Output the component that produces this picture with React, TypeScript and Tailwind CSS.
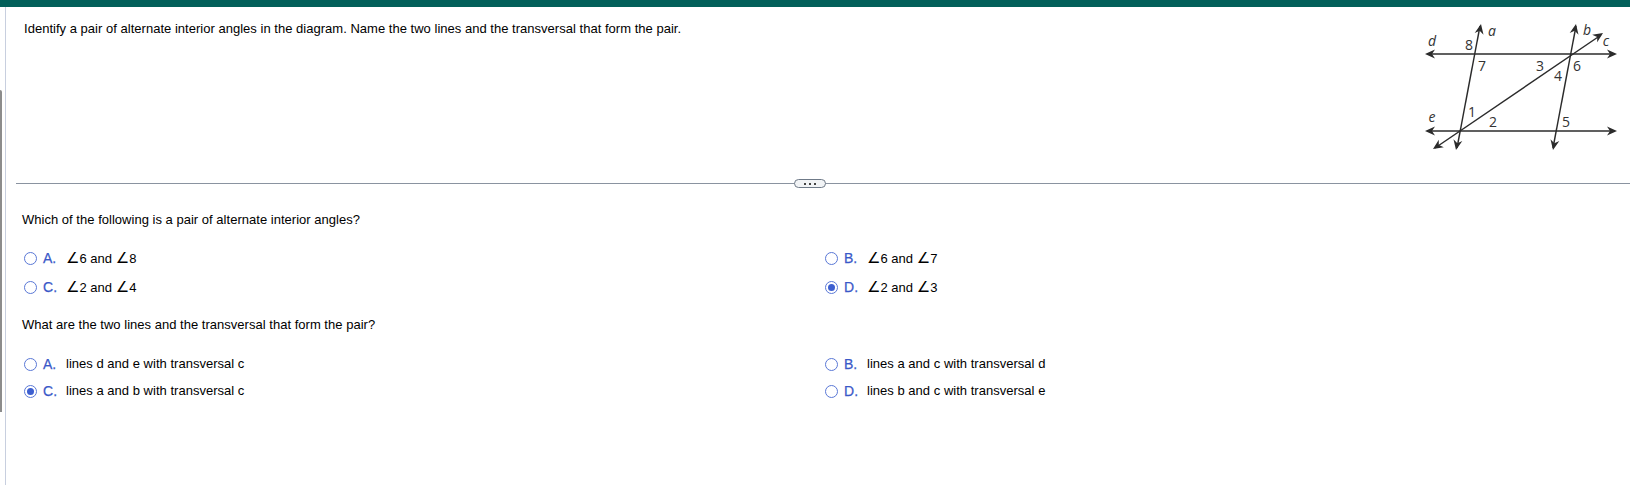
import type { ReactNode } from 'react';

interface OptionProps {
  letter: string;
  checked?: boolean;
  children: ReactNode;
}

function Option({ letter, checked, children }: OptionProps) {
  return (
    <div className="flex items-center h-5">
      <span className="flex items-center justify-center w-[13px] h-[13px] rounded-full border-[1.5px] border-[#5a78d6] bg-white">
        {checked && <span className="w-[7px] h-[7px] rounded-full bg-[#3d5fd0]" />}
      </span>
      <span className="ml-[6px] w-[23px] text-[#3a58c8] text-[14px] [-webkit-text-stroke:0.25px_#3a58c8]">{letter}.</span>
      <span className="text-[13px] text-black tracking-[0.02px]">{children}</span>
    </div>
  );
}

function AnglePair({ a, b }: { a: number; b: number }) {
  return (
    <span className="block pt-[2px]">
      <span className="font-['DejaVu_Sans'] text-[15px] leading-none">∠</span>
      {a} and <span className="font-['DejaVu_Sans'] text-[15px] leading-none">∠</span>
      {b}
    </span>
  );
}

function Arrow({ x, y, angle }: { x: number; y: number; angle: number }) {
  return <path d="M0 0 L-10 -4.5 L-7 0 L-10 4.5 Z" fill="#2b2b2b" transform={`translate(${x} ${y}) rotate(${angle})`} />;
}

function Diagram() {
  const labels: [string, number, number, boolean][] = [
    ['a', 82, 36, true],
    ['b', 177, 35, true],
    ['c', 196, 46, true],
    ['d', 22, 46, true],
    ['e', 22, 122, true],
    ['8', 59, 50, false],
    ['7', 72, 71, false],
    ['3', 130, 71, false],
    ['4', 148, 81, false],
    ['6', 167, 71, false],
    ['1', 62, 117, false],
    ['2', 83, 127, false],
    ['5', 156, 127, false],
  ];
  return (
    <svg width="220" height="160" viewBox="0 0 220 160" className="shrink-0">
      <g transform="translate(0 -7)">
        <g stroke="#2b2b2b" strokeWidth="1.4" fill="none">
          <line x1="18" y1="54" x2="205" y2="54" />
          <line x1="18" y1="131" x2="205" y2="131" />
          <line x1="70" y1="26" x2="47" y2="148" />
          <line x1="166" y1="26" x2="143" y2="148" />
          <line x1="191" y1="35" x2="25" y2="148" />
        </g>
        <Arrow x={15} y={54} angle={180} />
        <Arrow x={207} y={54} angle={0} />
        <Arrow x={15} y={131} angle={180} />
        <Arrow x={207} y={131} angle={0} />
        <Arrow x={71} y={24} angle={-79} />
        <Arrow x={46} y={150} angle={101} />
        <Arrow x={166} y={24} angle={-79} />
        <Arrow x={143} y={150} angle={101} />
        <Arrow x={193} y={33} angle={-34} />
        <Arrow x={23} y={149} angle={146} />
        {labels.map(([t, x, y, italic]) => (
          <text key={t} x={x} y={y} textAnchor="middle" fontSize="14" fontFamily="'Open Sans', sans-serif" fontStyle={italic ? 'italic' : 'normal'} fill="#333">
            {t}
          </text>
        ))}
      </g>
    </svg>
  );
}

export default function App() {
  return (
    <div className="flex flex-col h-[485px] overflow-hidden bg-white font-['Liberation_Sans',sans-serif] text-[13px] text-black tracking-[0.02px]">
      <div className="h-[7px] bg-[#03605a]" />
      <div className="flex flex-1">
        <div className="w-[5px]">
          <div className="mt-[83px] h-[322px] w-[2px] rounded-tr-[2px] bg-[#8c8c8c]" />
        </div>
        <div className="flex-1 border-l border-[#c8cfdf]">
          {/* Enunciado y figura */}
          <div className="flex justify-between h-[176px]">
            <p className="ml-[18px] mt-[12px] leading-5">
              Identify a pair of alternate interior angles in the diagram. Name the two lines and the transversal that form the pair.
            </p>
            <Diagram />
          </div>

          <div className="relative ml-[10px] h-px bg-[#8a93a0]">
            <div className="absolute left-[778px] top-[-4px] flex items-center justify-center gap-[3px] w-[32px] h-[9px] rounded-full border border-[#6f7a88] bg-[#f2f4f6]">
              <span className="w-[2px] h-[2px] bg-[#444]" />
              <span className="w-[2px] h-[2px] bg-[#444]" />
              <span className="w-[2px] h-[2px] bg-[#444]" />
            </div>
          </div>

          <div className="ml-[16px] mt-[26px] leading-5">Which of the following is a pair of alternate interior angles?</div>
          <div className="grid grid-cols-[801px_1fr] gap-y-[9px] ml-[18px] mt-[18px]">
            <Option letter="A"><AnglePair a={6} b={8} /></Option>
            <Option letter="B"><AnglePair a={6} b={7} /></Option>
            <Option letter="C"><AnglePair a={2} b={4} /></Option>
            <Option letter="D" checked><AnglePair a={2} b={3} /></Option>
          </div>

          <div className="ml-[16px] mt-[18px] leading-5">What are the two lines and the transversal that form the pair?</div>
          <div className="grid grid-cols-[801px_1fr] gap-y-[7px] ml-[18px] mt-[19px]">
            <Option letter="A">lines d and e with transversal c</Option>
            <Option letter="B">lines a and c with transversal d</Option>
            <Option letter="C" checked>lines a and b with transversal c</Option>
            <Option letter="D">lines b and c with transversal e</Option>
          </div>
        </div>
      </div>
    </div>
  );
}
